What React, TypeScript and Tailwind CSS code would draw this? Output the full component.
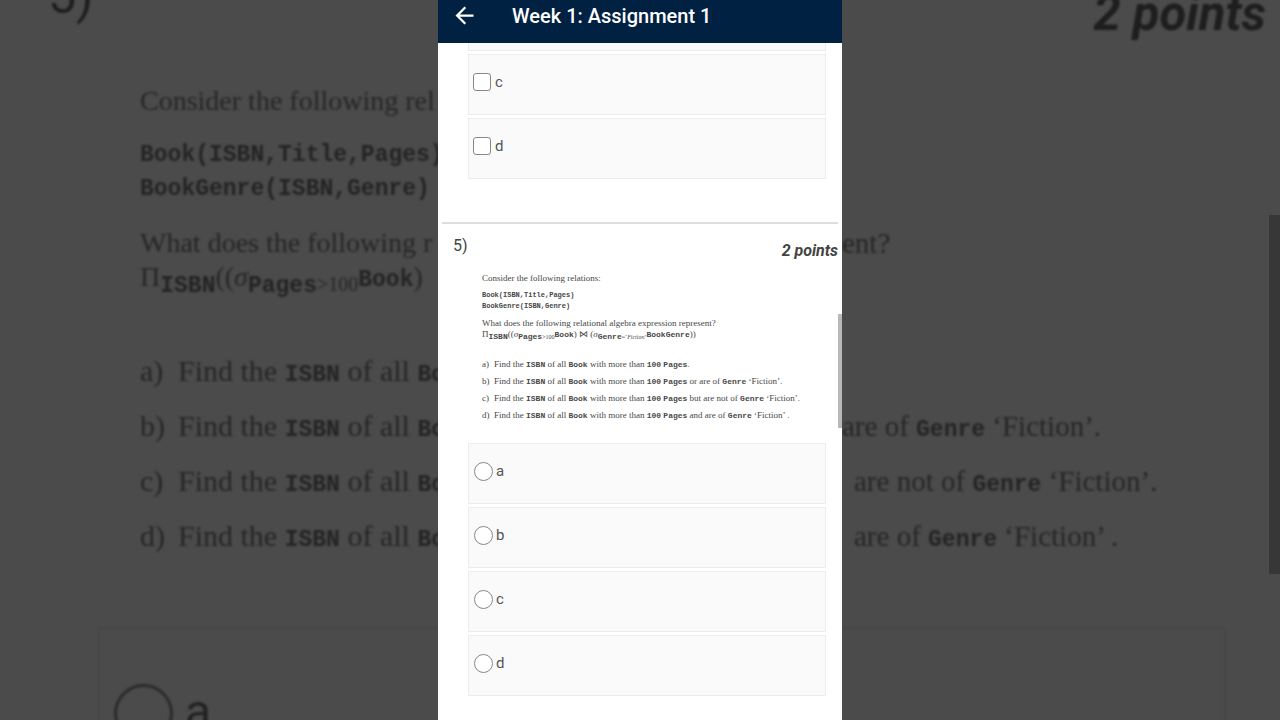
/**
 * Assignment page shown in a portrait frame, with a dimmed, enlarged
 * copy of the same question filling the sides of the window.
 */

import clsx from 'clsx'
import { MdArrowBack } from 'react-icons/md'

const MONO = "font-['Liberation_Mono',monospace] font-bold leading-none"

const ANSWERS = [
  { letter: 'a', tail: '.', genre: '' },
  { letter: 'b', tail: ' or are of ', genre: ' ‘Fiction’.' },
  { letter: 'c', tail: ' but are not of ', genre: ' ‘Fiction’.' },
  { letter: 'd', tail: ' and are of ', genre: ' ‘Fiction’ .' },
]

// What still shows of each answer to the right of the frame
const ANSWER_ENDS = [
  { key: 'b', start: 'are of ', genre: ' ‘Fiction’.', indent: 'pl-0' },
  { key: 'c', start: 'are not of ', genre: ' ‘Fiction’.', indent: 'pl-3' },
  { key: 'd', start: 'are of ', genre: ' ‘Fiction’ .', indent: 'pl-3' },
]

export default function App() {
  return (
    <div className="flex h-screen overflow-hidden bg-[#4b4b4b] font-['Roboto',sans-serif]">
      <LeftBackdrop />
      <main className="relative flex aspect-[101/180] h-screen shrink-0 flex-col overflow-hidden bg-white">
        <header className="flex h-[43px] shrink-0 items-center gap-[34px] bg-[#002142] pb-3 pl-[13px] text-white">
          <button aria-label="Back">
            <MdArrowBack className="size-[27px]" />
          </button>
          <h1 className="text-[20px] leading-6 font-medium whitespace-nowrap">Week 1: Assignment 1</h1>
        </header>

        {/* Previous question, scrolled most of the way out */}
        <div className="mr-4 ml-[30px] flex flex-col gap-[3px]">
          <div className="h-2 border-x border-b border-[#ececec] bg-[#fafafa]" />
          <Option type="checkbox" name="q4" letter="c" />
          <Option type="checkbox" name="q4" letter="d" />
        </div>

        <hr className="mx-1 mt-[43px] border-t-2 border-[#dedede]" />

        <div className="mr-1 ml-[15px] flex justify-between text-[16px] leading-5 text-[#444]">
          <span className="mt-3">5)</span>
          <strong className="mt-[17px] font-bold italic">2 points</strong>
        </div>

        <QuestionSheet />

        <div className="mt-[22px] mr-4 ml-[30px] flex flex-col gap-[3px]">
          {ANSWERS.map(a => (
            <Option key={a.letter} type="radio" name="q5" letter={a.letter} />
          ))}
        </div>

        {/* Scroll thumb */}
        <div className="absolute top-[314px] right-0 h-[114px] w-1 bg-[#b8b8b8]" />
      </main>
      <RightBackdrop />
    </div>
  )
}

function Option({ type, name, letter }: { type: 'checkbox' | 'radio'; name: string; letter: string }) {
  return (
    <label
      className={clsx(
        'flex h-[61px] shrink-0 items-start border border-[#ececec] bg-[#fafafa] pt-[18px] text-[15px] leading-[18px] text-[#555]',
        type === 'radio' ? 'gap-[3px] pl-[5px]' : 'gap-1 pl-1',
      )}
    >
      <input
        type={type}
        name={name}
        className={clsx(
          'appearance-none border border-[#888] bg-white',
          type === 'radio' ? 'size-[19px] rounded-full' : 'size-[18px] rounded-[3px]',
        )}
      />
      {letter}
    </label>
  )
}

function QuestionSheet() {
  const code = clsx(MONO, 'text-[8px] text-[#484848]')

  return (
    <div className="mt-3 flex flex-col gap-[6px] pl-11 font-['Liberation_Serif',serif] text-[9px] leading-[11px] whitespace-nowrap text-[#484848]">
      <p>Consider the following relations:</p>
      <div className="font-['Liberation_Mono',monospace] text-[7px] leading-[11px] font-bold">
        <p>Book(ISBN,Title,Pages)</p>
        <p>BookGenre(ISBN,Genre)</p>
      </div>
      <div>
        <p>What does the following relational algebra expression represent?</p>
        <p className="h-[11px]">
          Π<sub className={code}>ISBN</sub>((<i>σ</i>
          <sub className={code}>Pages</sub>
          <sub className="text-[6px]">&gt;100</sub>
          <span className={code}>Book</span>) ⋈ (<i>σ</i>
          <sub className={code}>Genre</sub>
          <sub className="text-[6px]">
            =‘<i>Fiction</i>’
          </sub>
          <span className={code}>BookGenre</span>))
        </p>
      </div>
      <ul className="mt-[13px] flex flex-col gap-[6px]">
        {ANSWERS.map(a => (
          <li key={a.letter} className="flex h-[11px]">
            <span className="w-3 shrink-0">{a.letter})</span>
            <span className="whitespace-pre">
              Find the <span className={code}>ISBN</span> of all <span className={code}>Book</span> with more than{' '}
              <span className={code}>100</span> <span className={code}>Pages</span>
              {a.tail}
              {a.genre && <span className={code}>Genre</span>}
              {a.genre}
            </span>
          </li>
        ))}
      </ul>
    </div>
  )
}

function LeftBackdrop() {
  const code = clsx(MONO, 'text-[23px] text-[#242424]')

  return (
    <aside aria-hidden className="min-w-0 flex-1 overflow-hidden">
      <div className="flex flex-col whitespace-nowrap blur-[1px]">
        <div className="h-[84px] pl-12 text-[50px] leading-[60px] text-[#1e1e1e]">
          <p className="-mt-[34px]">5)</p>
        </div>
        <div className="flex flex-col gap-5 pl-[140px] font-['Liberation_Serif',serif] text-[28px] leading-[34px] text-[#262626]">
          <p>Consider the following rel</p>
          <div className="font-['Liberation_Mono',monospace] text-[23px] font-bold text-[#242424]">
            <p>Book(ISBN,Title,Pages)</p>
            <p>BookGenre(ISBN,Genre)</p>
          </div>
          <div>
            <p>What does the following r</p>
            <p className="h-[34px]">
              Π<sub className={code}>ISBN</sub>((<i>σ</i>
              <sub className={code}>Pages</sub>
              <sub className="text-[20px]">&gt;100</sub>
              <span className={code}>Book</span>)
            </p>
          </div>
          <ul className="mt-10 flex flex-col gap-[21px] text-[30px]">
            {ANSWERS.map(a => (
              <li key={a.letter} className="flex h-[34px]">
                <span className="w-[38px] shrink-0">{a.letter})</span>
                <span>
                  Find the <span className={code}>ISBN</span> of all <span className={code}>Bo</span>
                </span>
              </li>
            ))}
          </ul>
        </div>
        <div className="mt-[74px] ml-[98px] flex items-start gap-3 border-t-2 border-l-2 border-[#474747] pt-[55px] pl-[14px]">
          <span className="size-[59px] rounded-full border-3 border-[#2b2b2b]" />
          <span className="text-[48px] leading-[56px] text-[#222]">a</span>
        </div>
      </div>
    </aside>
  )
}

function RightBackdrop() {
  return (
    <aside aria-hidden className="relative min-w-0 flex-1 overflow-hidden">
      <div className="flex flex-col whitespace-nowrap blur-[1px]">
        <div className="h-[84px] pr-[14px] text-right text-[49px] leading-[60px] text-[#1e1e1e]">
          <p className="-mt-4 font-bold italic">2 points</p>
        </div>
        <div className="mt-[142px] font-['Liberation_Serif',serif] text-[29px] leading-[34px] text-[#262626]">
          <p>ent?</p>
          <ul className="mt-[149px] flex flex-col gap-[21px]">
            {ANSWER_ENDS.map(a => (
              <li key={a.key} className={clsx('h-[34px] whitespace-pre', a.indent)}>
                {a.start}
                <span className={clsx(MONO, 'text-[23px] text-[#242424]')}>Genre</span>
                {a.genre}
              </li>
            ))}
          </ul>
        </div>
        <div className="mt-[74px] mr-[54px] h-[116px] border-t-2 border-r-2 border-[#474747]" />
      </div>
      <div className="absolute top-[215px] right-0 h-[359px] w-[11px] bg-[#373737]" />
    </aside>
  )
}
